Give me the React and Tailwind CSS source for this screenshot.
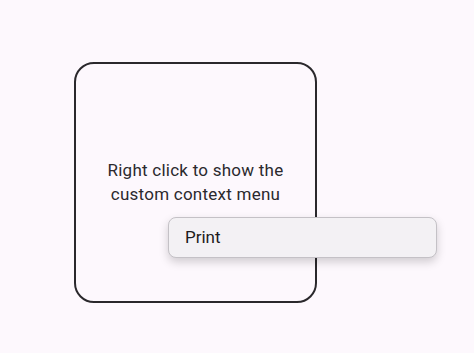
export default function App() {
  return (
    <main
      className="relative h-[353px] w-[474px] overflow-hidden bg-[#fdf8fd] pl-[74px] pt-[62px]"
      style={{ fontFamily: "Roboto, 'Noto Sans', sans-serif" }}
    >
      {/* Target area */}
      <div className="flex h-[241px] w-[243px] items-center justify-center rounded-[20px] border-2 border-[#2a282c]">
        <p className="pb-[1px] text-center text-[17px] leading-[24px] tracking-[0.25px] text-[#2b292d]">
          Right click to show the
          <br />
          custom context menu
        </p>
      </div>

      {/* Context menu */}
      <div className="absolute left-[168px] top-[217px] flex h-[41px] w-[269px] items-center rounded-[8px] border border-[#c4c1c6] bg-[#f3f1f4] px-[16px] shadow-[0_4px_10px_rgba(0,0,0,0.18)]">
        <span className="text-[17px] text-[#1d1b20]">Print</span>
      </div>
    </main>
  );
}
